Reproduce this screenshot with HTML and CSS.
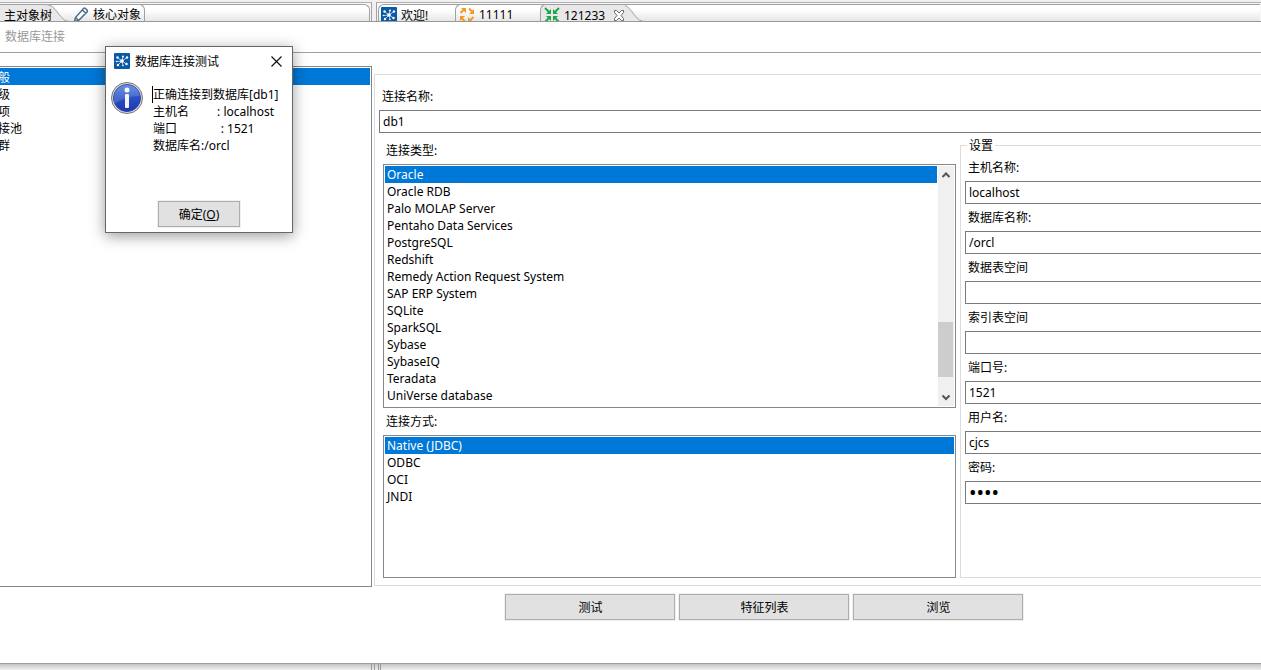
FILE: index.html
```html
<!DOCTYPE html>
<html lang="zh-CN">
<head>
  <meta charset="UTF-8">
  <meta name="viewport" content="width=device-width, initial-scale=1">
  <title>数据库连接</title>
  <link rel="stylesheet" href="styles.css">
</head>
<body>

<!-- shared icons -->
<svg class="sprite" aria-hidden="true">
  <symbol id="app-icon" viewBox="0 0 16 16">
    <rect width="16" height="16" rx="1" fill="#0a5aa6"/>
    <path d="M3.500 4.500L8 8l1-4.500M8 8l5-3.500M8 8l-5.500.5M8 8l-4 4M8 8l1 4.500M8 8l4.500 3" stroke="#d5e6f5" stroke-width=".8" fill="none"/>
    <g fill="#fff">
      <circle cx="3.500" cy="4.500" r="1.200"/><circle cx="9" cy="3.500" r="1"/><circle cx="13" cy="4.500" r="1.200"/>
      <circle cx="2.500" cy="8.500" r=".8"/><circle cx="4" cy="12" r="1.200"/><circle cx="9" cy="12.500" r=".8"/>
      <circle cx="12.500" cy="11" r="1.200"/><circle cx="8" cy="8" r="1.800"/>
    </g>
  </symbol>
</svg>

<header class="workbench">
  <nav class="folder folder-left">
    <div class="tabs">
      <button class="tab active first">主对象树</button>
      <svg class="slope" width="26" height="18" viewBox="0 0 26 18">
        <path class="slope-fill" d="M0 0C8 0 10 4 14 9S20 18 26 18H0z"/>
        <path class="slope-line" d="M0 .5C8 .5 10 4 14 9S20 17.500 26 17.500"/>
      </svg>
      <button class="tab last">
        <svg width="16" height="16" viewBox="0 0 16 16">
          <path d="M1.500 14.500l1-4 8-9q1-.8 2 0l1.500 1.500q.8 1 0 2l-8.500 8.500zM9.500 3l3.500 3.500M2.500 10.500l3 3" fill="#fff" stroke="#456c8f" stroke-width="1.500"/>
        </svg>
        核心对象
      </button>
    </div>
  </nav>

  <nav class="folder folder-right">
    <div class="tabs">
      <button class="tab welcome">
        <svg width="16" height="16"><use href="#app-icon"/></svg>
        欢迎!
      </button>
      <button class="tab job">
        <svg width="16" height="16" viewBox="0 0 16 16">
          <path d="M1.500 6L5 2.500M10 1.500L13.500 5M14.500 10L11 13.500M6 14.500L2.500 11" stroke="#f39a1e" stroke-width="1.800"/>
          <path d="M2 1h5v5zM15 2v5h-5zM14 15H9v-5zM1 14V9h5z" fill="#f39a1e"/>
        </svg>
        11111
      </button>
      <button class="tab active trans">
        <svg width="16" height="16" viewBox="0 0 16 16">
          <path d="M1 1l4 4M15 1l-4 4M1 15l4-4M15 15l-4-4" stroke="#1fa64a" stroke-width="2"/>
          <path d="M7 2v5H2zM9 2v5h5zM7 14V9H2zM9 14V9h5z" fill="#1fa64a"/>
        </svg>
        121233
        <svg class="tab-close" width="12" height="11" viewBox="0 0 12 11">
          <path d="M1.500.5h2L6 3 8.500.5h2v2L8 5.500l2.500 3v2h-2L6 8l-2.500 2.500h-2v-2L4 5.500l-2.500-3z" fill="#fff" stroke="#666"/>
        </svg>
      </button>
      <svg class="slope" width="26" height="18" viewBox="0 0 26 18">
        <path class="slope-fill" d="M0 0C8 0 10 4 14 9S20 18 26 18H0z"/>
        <path class="slope-line" d="M0 .5C8 .5 10 4 14 9S20 17.500 26 17.500"/>
      </svg>
    </div>
  </nav>
</header>

<main class="connection">
  <h1>数据库连接</h1>

  <div class="connection-body">
    <select class="listbox pages" size="5" aria-label="分类">
      <option selected>般</option>
      <option>级</option>
      <option>项</option>
      <option>接池</option>
      <option>群</option>
    </select>

    <section class="panel">
      <div class="field name-field">
        <label for="name">连接名称:</label>
        <input type="text" id="name" value="db1">
      </div>

      <div class="columns">
        <div class="types">
          <label for="type">连接类型:</label>
          <div class="scroll-list">
            <select class="listbox" id="type" size="14">
              <option selected>Oracle</option>
              <option>Oracle RDB</option>
              <option>Palo MOLAP Server</option>
              <option>Pentaho Data Services</option>
              <option>PostgreSQL</option>
              <option>Redshift</option>
              <option>Remedy Action Request System</option>
              <option>SAP ERP System</option>
              <option>SQLite</option>
              <option>SparkSQL</option>
              <option>Sybase</option>
              <option>SybaseIQ</option>
              <option>Teradata</option>
              <option>UniVerse database</option>
            </select>
            <div class="scrollbar">
              <svg width="16" height="18" viewBox="0 0 16 18"><path d="M4.500 11L8 7.500l3.500 3.500"/></svg>
              <div class="track"><div class="thumb"></div></div>
              <svg width="16" height="18" viewBox="0 0 16 18"><path d="M4.500 7.500L8 11l3.500-3.500"/></svg>
            </div>
          </div>

          <label for="access">连接方式:</label>
          <select class="listbox access" id="access" size="4">
            <option selected>Native (JDBC)</option>
            <option>ODBC</option>
            <option>OCI</option>
            <option>JNDI</option>
          </select>
        </div>

        <fieldset class="settings">
          <legend>设置</legend>
          <div class="field">
            <label for="host">主机名称:</label>
            <input type="text" id="host" value="localhost">
          </div>
          <div class="field">
            <label for="database">数据库名称:</label>
            <input type="text" id="database" value="/orcl">
          </div>
          <div class="field">
            <label for="data-space">数据表空间</label>
            <input type="text" id="data-space">
          </div>
          <div class="field">
            <label for="index-space">索引表空间</label>
            <input type="text" id="index-space">
          </div>
          <div class="field">
            <label for="port">端口号:</label>
            <input type="text" id="port" value="1521">
          </div>
          <div class="field">
            <label for="user">用户名:</label>
            <input type="text" id="user" value="cjcs">
          </div>
          <div class="field">
            <label for="password">密码:</label>
            <input type="password" id="password" value="cjcs">
          </div>
        </fieldset>
      </div>
    </section>
  </div>

  <div class="actions">
    <button class="btn">测试</button>
    <button class="btn">特征列表</button>
    <button class="btn">浏览</button>
  </div>
</main>

<footer class="workbench-bottom">
  <div class="sash"></div>
</footer>

<div class="message-box" role="dialog" aria-labelledby="message-title">
  <div class="message-title">
    <svg width="16" height="16"><use href="#app-icon"/></svg>
    <h2 id="message-title">数据库连接测试</h2>
    <button class="close" aria-label="关闭">
      <svg width="11" height="11" viewBox="0 0 11 11"><path d="M.5.5l10 10M10.500.5l-10 10" stroke="#111" stroke-width="1.200" fill="none"/></svg>
    </button>
  </div>
  <div class="message-content">
    <svg width="32" height="32" viewBox="0 0 32 32">
      <defs>
        <linearGradient id="info-blue" x1="0" y1="0" x2="0" y2="1">
          <stop offset="0" stop-color="#4f7fe0"/>
          <stop offset=".5" stop-color="#2850c4"/>
          <stop offset="1" stop-color="#1a35b4"/>
        </linearGradient>
      </defs>
      <circle cx="16" cy="16" r="15.500" fill="#d8d8d8" stroke="#777"/>
      <circle cx="16" cy="16" r="13.500" fill="url(#info-blue)" stroke="#2b459f"/>
      <path d="M3 17a13 13 0 0 1 26-3Q17 13 3 22z" fill="#fff" opacity=".15"/>
      <circle cx="16" cy="8" r="2.500" fill="#fff"/>
      <rect x="14" y="12" width="4" height="14" rx="1" fill="#f4f4f4"/>
    </svg>
    <pre>正确连接到数据库[db1]
主机名         : localhost
端口              : 1521
数据库名:/orcl</pre>
  </div>
  <button class="btn">确定(<u>O</u>)</button>
</div>

</body>
</html>
```
FILE: styles.css
```css
* { margin: 0; padding: 0; box-sizing: border-box; }

body {
  position: relative;
  display: flex;
  flex-direction: column;
  min-height: 100vh;
  overflow-x: hidden;
  background: #f0f0f0;
  color: #000;
  font: 12px/17px "Noto Sans", "Noto Sans CJK SC", sans-serif;
}

button, input, select, pre {
  font: inherit;
  color: inherit;
}

h1, h2 {
  font-size: 12px;
  font-weight: normal;
}

.sprite {
  position: absolute;
  width: 0;
  height: 0;
}

/* tab folders behind the dialog */
.workbench {
  display: flex;
  gap: 4px;
  padding-top: 2px;
}

.folder {
  padding: 1px 1px 0;
  border-top: 1px solid #b0b0b4;
  background: #f7f7f7;
}

.folder-left {
  flex: 0 0 372px;
  padding-left: 0;
  border-right: 1px solid #a0a0a0;
}

.folder-right {
  flex: 1;
  border-left: 1px solid #a0a0a0;
}

.tabs {
  display: flex;
  height: 17px;
  border-top: 1px solid #a0a0a0;
  background: linear-gradient(#fff 30%, #e6e6e6);
}

.folder-left .tabs {
  border-right: 1px solid #a0a0a0;
  border-radius: 0 6px 0 0;
}

.folder-right .tabs {
  border-left: 1px solid #a0a0a0;
  border-radius: 6px 0 0 0;
}

.tab {
  position: relative;
  display: flex;
  align-items: center;
  gap: 4px;
  height: 20px;
  border: 0;
  background: none;
  white-space: nowrap;
}

.tab svg { flex: none; }

.tab.active {
  height: 16px;
  background: #e8e8e8;
}

.first {
  z-index: 1;
  width: 44px;
  padding: 4px 0 0 4px;
}

.last {
  margin-top: -1px;
  padding: 0 3px;
  border-top: 1px solid #a0a0a0;
  border-right: 1px solid #a0a0a0;
  border-radius: 0 6px 0 0;
}

.welcome {
  width: 76px;
  padding-left: 2px;
}

.job,
.trans {
  margin-top: -1px;
  padding-left: 3px;
  border-top: 1px solid #a0a0a0;
  border-left: 1px solid #a0a0a0;
  border-radius: 6px 0 0 0;
}

.job { width: 85px; }

.tab.trans {
  height: 17px;
  padding-top: 4px;
}

.tab-close { margin-left: 4px; }

.slope {
  flex: none;
  margin-top: -1px;
}

.trans + .slope { margin-left: -6px; }

.slope-fill { fill: #e8e8e8; }
.slope-line { fill: none; stroke: #a0a0a0; }

/* connection dialog */
.connection {
  z-index: 1;
  flex: 1;
  border-top: 1px solid #999;
  border-bottom: 1px solid #a0a0a0;
  background: #fff;
  overflow: hidden;
}

.connection h1 {
  height: 31px;
  padding-left: 5px;
  border-bottom: 1px solid #a0a0a0;
  color: #999;
  line-height: 29px;
}

.connection-body {
  display: flex;
  gap: 2px;
  padding-top: 13px;
}

.listbox {
  display: block;
  border: 1px solid #828790;
  border-radius: 0;
  padding: 1px;
  background: #fff;
  outline: 0;
  overflow: hidden;
}

.listbox option {
  min-height: 17px;
  height: 17px;
  padding: 0 2px;
  line-height: 17px;
}

.listbox option:checked {
  background: linear-gradient(#0078d7, #0078d7);
  -webkit-text-fill-color: #fff;
}

.pages {
  flex: 0 0 376px;
  height: auto;
  margin-left: -4px;
}

.pages option { padding: 0; }

.panel {
  flex: 1;
  margin: 8px -2px 1px 0;
  padding: 13px 0 7px 4px;
  border: 1px solid #dcdcdc;
}

label {
  display: block;
  padding-left: 3px;
  line-height: 17px;
}

.field label { margin-bottom: 5px; }

input {
  display: block;
  width: 100%;
  height: 23px;
  padding: 0 3px;
  border: 1px solid #7a7a7a;
  border-radius: 0;
  background: #fff;
}

input[type="password"] { font-size: 20px; }

/* the right edge runs on past the window */
.name-field,
.settings {
  margin-right: -2px;
}

.columns {
  display: grid;
  grid-template-columns: 573fr 302fr;
  gap: 4px;
  padding: 4px 0 0 4px;
}

.types { padding-top: 2px; }

.types label {
  padding: 3px 3px 5px;
}

.scroll-list {
  display: flex;
  height: 244px;
  margin-bottom: 2px;
  border: 1px solid #828790;
}

.scroll-list .listbox {
  flex: 1;
  height: 242px;
  border: 0;
}

.scrollbar {
  display: flex;
  flex-direction: column;
  width: 16px;
  margin: 1px 1px 1px 0;
  background: #f0f0f0;
}

.scrollbar path {
  fill: none;
  stroke: #555;
  stroke-width: 2;
}

.track { flex: 1; }

.thumb {
  width: 15px;
  height: 55px;
  margin-top: 138px;
  background: #cdcdcd;
}

.access {
  width: 100%;
  height: 143px;
}

.settings {
  padding: 5px 0 0 4px;
  border: 1px solid #dcdcdc;
}

.settings legend {
  margin-left: 2px;
  padding: 0 2px;
}

.settings .field { margin-bottom: 5px; }

.btn {
  height: 26px;
  border: 1px solid #adadad;
  background: #e1e1e1;
  box-shadow: 0 0 0 1px #f0f0f0;
}

.actions {
  display: flex;
  gap: 4px;
  padding: 7px 0 43px calc(40% + 1px);
}

.actions .btn { width: 170px; }

.workbench-bottom {
  height: 6px;
  background: linear-gradient(#c4c4c4, #efefef);
}

.sash {
  display: flex;
  justify-content: center;
  width: 10px;
  height: 6px;
  margin-left: 371px;
  border: solid #999;
  border-width: 0 1px;
}

.sash::before {
  content: "";
  width: 3px;
  border: solid #999;
  border-width: 0 1px;
}

/* test result */
.message-box {
  position: absolute;
  z-index: 2;
  top: 46px;
  left: 105px;
  width: 188px;
  height: 187px;
  border: 1px solid #666;
  background: #fff;
  box-shadow: 0 3px 14px rgba(0, 0, 0, 0.4);
}

.message-title {
  display: flex;
  align-items: center;
  gap: 5px;
  height: 28px;
  padding: 0 10px 0 8px;
}

.close {
  display: flex;
  margin-left: auto;
  border: 0;
  background: none;
}

.message-content {
  display: flex;
  gap: 9px;
  height: 126px;
  padding: 7px 0 0 5px;
}

.message-content pre {
  height: 17px;
  margin-top: 4px;
  border-left: 1px solid #000;
}

.message-box > .btn {
  display: block;
  width: 82px;
  margin-left: 52px;
}
```
